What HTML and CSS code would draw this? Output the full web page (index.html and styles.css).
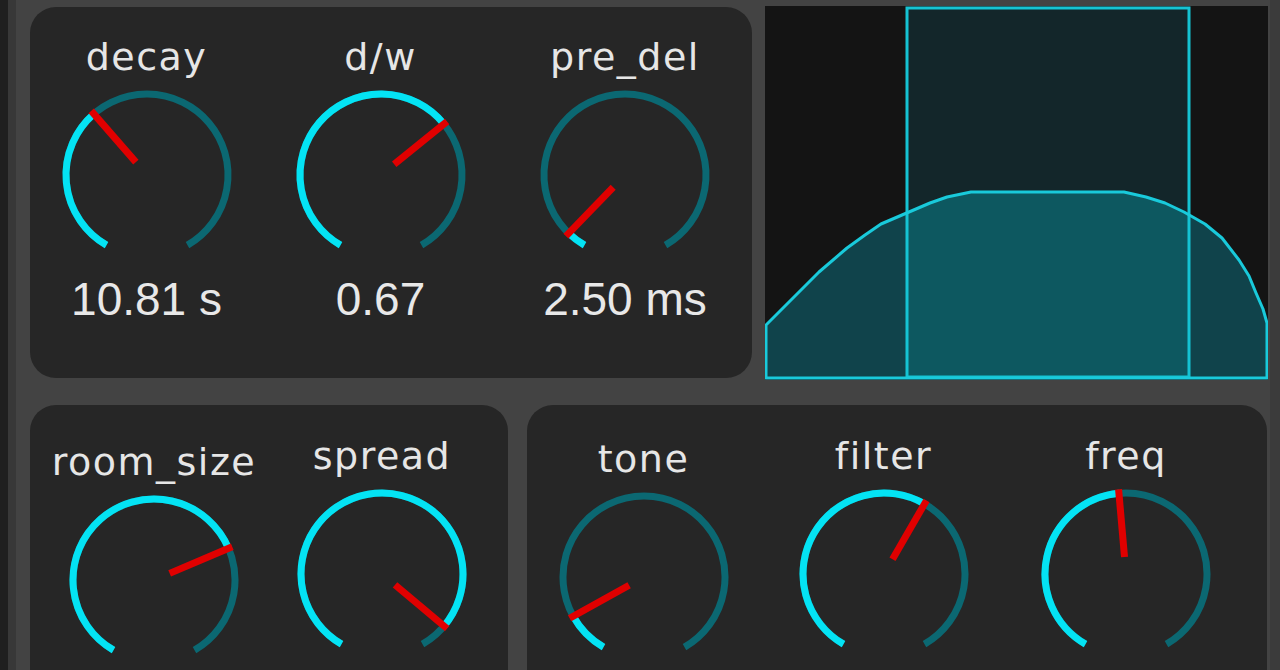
FILE: index.html
```html
<!DOCTYPE html>
<html lang="en">
<head>
<meta charset="utf-8">
<title>Reverb</title>
<link rel="stylesheet" href="styles.css">
</head>
<body>
<div class="device">
  <div class="edge edge--outer"></div>
  <div class="edge edge--inner"></div>
  <main class="main">
    <section class="row row--top">
      <div class="panel panel--top">
        <div class="cell">
          <div class="label">decay</div>
          <svg class="knob" viewBox="0 0 180 180" width="180" height="180">
            <path class="track" d="M49.5 160.15 A81 81 0 1 1 130.5 160.15"/>
            <path class="fill" d="M49.5 160.15 A81 81 0 0 1 36.86 28.87"/>
            <line class="needle" x1="78.85" y1="77.17" x2="34.23" y2="25.85"/>
          </svg>
          <div class="value">10.81 s</div>
        </div>
        <div class="cell">
          <div class="label">d/w</div>
          <svg class="knob" viewBox="0 0 180 180" width="180" height="180">
            <path class="track" d="M49.5 160.15 A81 81 0 1 1 130.5 160.15"/>
            <path class="fill" d="M49.5 160.15 A81 81 0 1 1 152.95 39.03"/>
            <line class="needle" x1="103.21" y1="79.30" x2="156.05" y2="36.51"/>
          </svg>
          <div class="value">0.67</div>
        </div>
        <div class="cell">
          <div class="label">pre_del</div>
          <svg class="knob" viewBox="0 0 180 180" width="180" height="180">
            <path class="track" d="M49.5 160.15 A81 81 0 1 1 130.5 160.15"/>
            <path class="fill" d="M49.5 160.15 A81 81 0 0 1 33.73 148.26"/>
            <line class="needle" x1="78.19" y1="102.23" x2="30.95" y2="151.14"/>
          </svg>
          <div class="value">2.50 ms</div>
        </div>
      </div>
      <div class="display">
        <svg viewBox="0 0 503 374" width="503" height="374">
          <defs>
            <clipPath id="boxclip"><rect x="141" y="1" width="283" height="371"/></clipPath>
          </defs>
          <rect class="disp-bg" x="0" y="0" width="503" height="374"/>
          <rect class="box-fill" x="141" y="1" width="283" height="371"/>
          <polygon class="curve-fill" points="1,319 30,290 54,266 82,242 100,229 116,218 144,206 165,197 182,191 206,186 359,186 381,191 400,197 419,206 440,218 457,232 474,254 484,270 491,287 498,303 502,317 502,372 1,372"/>
          <polygon class="curve-fill curve-fill--inner" clip-path="url(#boxclip)" points="1,319 30,290 54,266 82,242 100,229 116,218 144,206 165,197 182,191 206,186 359,186 381,191 400,197 419,206 440,218 457,232 474,254 484,270 491,287 498,303 502,317 502,372 1,372"/>
          <rect class="box-line" x="142" y="2" width="282" height="369"/>
          <polygon class="curve-line" points="1,319 30,290 54,266 82,242 100,229 116,218 144,206 165,197 182,191 206,186 359,186 381,191 400,197 419,206 440,218 457,232 474,254 484,270 491,287 498,303 502,317 502,372 1,372"/>
        </svg>
      </div>
    </section>
    <section class="row row--bottom">
      <div class="panel panel--left">
        <div class="cell cell--drop-lg">
          <div class="label">room_size</div>
          <svg class="knob" viewBox="0 0 180 180" width="180" height="180">
            <path class="track" d="M49.5 160.15 A81 81 0 1 1 130.5 160.15"/>
            <path class="fill" d="M49.5 160.15 A81 81 0 1 1 164.56 58.35"/>
            <line class="needle" x1="105.65" y1="83.36" x2="168.24" y2="56.79"/>
          </svg>
        </div>
        <div class="cell">
          <div class="label">spread</div>
          <svg class="knob" viewBox="0 0 180 180" width="180" height="180">
            <path class="track" d="M49.5 160.15 A81 81 0 1 1 130.5 160.15"/>
            <path class="fill" d="M49.5 160.15 A81 81 0 1 1 152.05 142.07"/>
            <line class="needle" x1="103.02" y1="100.93" x2="155.11" y2="144.64"/>
          </svg>
        </div>
      </div>
      <div class="panel panel--right">
        <div class="cell cell--drop-sm">
          <div class="label">tone</div>
          <svg class="knob" viewBox="0 0 180 180" width="180" height="180">
            <path class="track" d="M49.5 160.15 A81 81 0 1 1 130.5 160.15"/>
            <path class="fill" d="M49.5 160.15 A81 81 0 0 1 19.16 129.27"/>
            <line class="needle" x1="75.13" y1="98.24" x2="15.66" y2="131.21"/>
          </svg>
        </div>
        <div class="cell">
          <div class="label">filter</div>
          <svg class="knob" viewBox="0 0 180 180" width="180" height="180">
            <path class="track" d="M49.5 160.15 A81 81 0 1 1 130.5 160.15"/>
            <path class="fill" d="M49.5 160.15 A81 81 0 1 1 130.5 19.85"/>
            <line class="needle" x1="98.5" y1="75.28" x2="132.5" y2="16.39"/>
          </svg>
        </div>
        <div class="cell">
          <div class="label">freq</div>
          <svg class="knob" viewBox="0 0 180 180" width="180" height="180">
            <path class="track" d="M49.5 160.15 A81 81 0 1 1 130.5 160.15"/>
            <path class="fill" d="M49.5 160.15 A81 81 0 0 1 82.94 9.31"/>
            <line class="needle" x1="88.52" y1="73.06" x2="82.59" y2="5.32"/>
          </svg>
        </div>
      </div>
    </section>
  </main>
  <div class="edge edge--right"></div>
</div>
</body>
</html>
```

FILE: styles.css
```css
html, body {
  margin: 0;
  padding: 0;
  background: #434343;
  overflow: hidden;
}

.device {
  display: flex;
  width: 1280px;
  height: 670px;
  overflow: hidden;
}

.edge {
  flex: 0 0 auto;
  height: 100%;
}

.edge--outer {
  width: 8px;
  background: #1f1f1f;
}

.edge--inner {
  width: 8px;
  background: #383838;
}

.edge--right {
  width: 10px;
  background: #3b3b3b;
}

.main {
  flex: 1 1 auto;
  padding: 6px 0 0 14px;
  display: flex;
  flex-direction: column;
  gap: 25px;
}

.row {
  display: flex;
  align-items: flex-start;
}

.row--top {
  gap: 13px;
  height: 374px;
}

.row--bottom {
  gap: 19px;
}

.panel {
  background: #262626;
  border-radius: 26px;
  display: grid;
  align-items: start;
}

.panel--top {
  width: 722px;
  height: 371px;
  margin-top: 1px;
  padding-top: 30px;
  box-sizing: border-box;
  grid-template-columns: 233px 235px 1fr;
}

.panel--left {
  width: 478px;
  height: 300px;
  padding-top: 31px;
  box-sizing: border-box;
  grid-template-columns: 248px 208px;
}

.panel--right {
  width: 740px;
  height: 300px;
  padding-top: 31px;
  box-sizing: border-box;
  grid-template-columns: 233px 247px 238px;
}

.cell {
  display: flex;
  flex-direction: column;
  align-items: center;
}

.cell--drop-lg {
  margin-top: 6px;
}

.cell--drop-sm {
  margin-top: 3px;
}

.label {
  font-family: "DejaVu Sans", sans-serif;
  font-size: 38px;
  line-height: 40px;
  letter-spacing: 1.5px;
  color: #e6e6e6;
  white-space: nowrap;
}

.knob {
  display: block;
  margin-top: 8px;
  overflow: visible;
}

.track,
.fill {
  fill: none;
  stroke-width: 7;
  stroke-linecap: butt;
}

.track {
  stroke: #0b6872;
}

.fill {
  stroke: #04e3f4;
}

.needle {
  stroke: #e00000;
  stroke-width: 7;
  stroke-linecap: butt;
}

.value {
  margin-top: 8px;
  font-family: "Liberation Sans", Arial, sans-serif;
  font-size: 46px;
  line-height: 52px;
  color: #e8e8e8;
  white-space: nowrap;
}

.display {
  width: 503px;
  height: 374px;
  flex: 0 0 auto;
}

.display svg {
  display: block;
}

.disp-bg {
  fill: #141414;
}

.box-fill {
  fill: #13262a;
}

.curve-fill {
  fill: #10434b;
}

.curve-fill--inner {
  fill: #0d5860;
}

.box-line {
  fill: none;
  stroke: #15c3d3;
  stroke-width: 3;
}

.curve-line {
  fill: none;
  stroke: #19cadb;
  stroke-width: 3;
  stroke-linejoin: round;
}
```
